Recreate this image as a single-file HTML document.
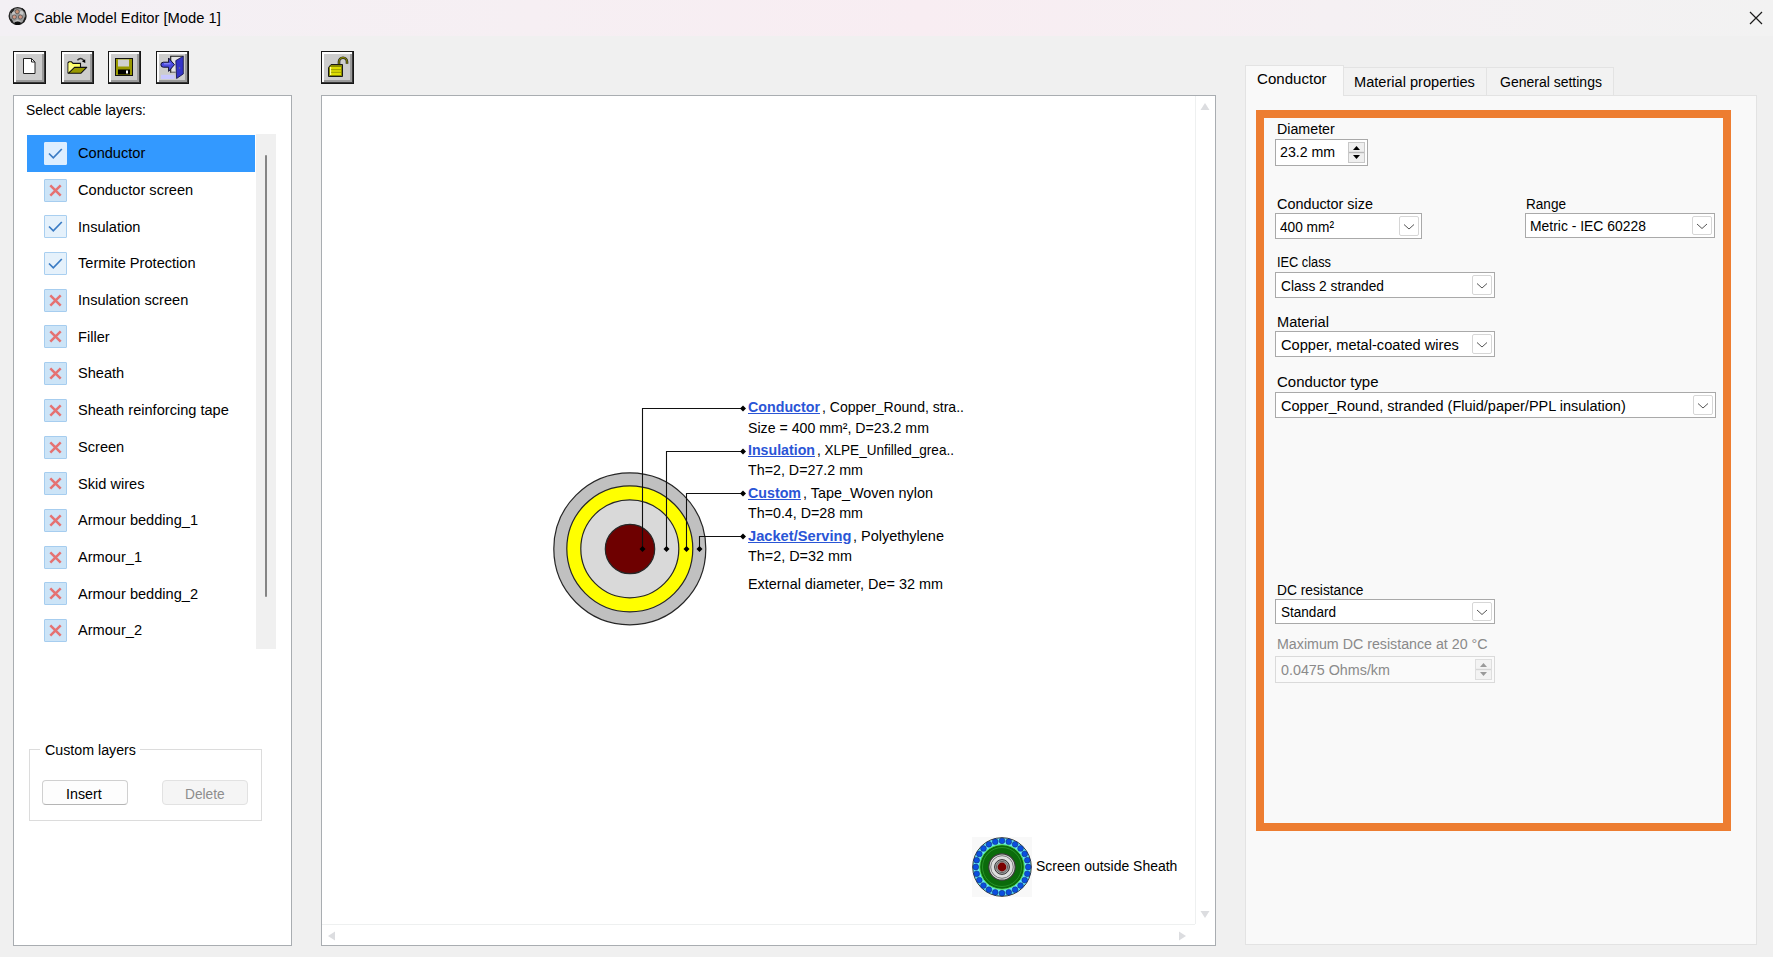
<!DOCTYPE html>
<html><head><meta charset="utf-8">
<style>
*{box-sizing:border-box;margin:0;padding:0}
html,body{width:1773px;height:957px;overflow:hidden;background:#f0f0f0;font-family:"Liberation Sans",sans-serif;color:#000}
body{position:relative}
.a{position:absolute}
.t{position:absolute;white-space:nowrap;line-height:1}
.tb{position:absolute;top:51px;width:33px;height:33px;border:1px solid #161616;background:#cdcdcd;box-shadow:inset -1px -1px 0 #383838,inset 2px 2px 0 #fdfdfd,inset -3px -3px 0 #9a9a9a}
</style></head><body>
<div class="a" style="left:0;top:0;width:1773px;height:36px;background:linear-gradient(90deg,#f3f0f4 0%,#f6eff3 30%,#f8edf2 52%,#f5f0f3 75%,#f2f2f2 100%)"></div>
<svg class="a" style="left:6px;top:4px" width="24" height="24" viewBox="0 0 24 24">
<circle cx="11.6" cy="12" r="8.4" fill="#9a9a9a" stroke="#262626" stroke-width="1.4"/>
<path d="M5 9l3-4M16 4.5l3 3M19.5 13l-2 5M4.5 15l2 3" stroke="#1c1c1c" stroke-width="1.4"/>
<circle cx="8" cy="9.5" r="2" fill="#c4c4c4"/><circle cx="15.5" cy="9" r="2" fill="#c8c8c8"/>
<circle cx="11.2" cy="7.7" r="2.1" fill="#c48f74" stroke="#555" stroke-width="0.8"/>
<circle cx="8.3" cy="13" r="2.1" fill="#d09480" stroke="#555" stroke-width="0.8"/>
<circle cx="14.4" cy="13" r="2.1" fill="#d09480" stroke="#555" stroke-width="0.8"/>
<path d="M8 17.5l3.6-2 3.6 2z" fill="#c6c6c6"/>
<ellipse cx="11.6" cy="19.3" rx="3.2" ry="1.8" fill="#0c0c0c"/>
</svg>
<div class="t" style="left:33.50px;top:9.83px;font-size:15.20px;color:#000;transform:scaleX(0.9708);transform-origin:0 0;">Cable Model Editor [Mode 1]</div>
<svg class="a" style="left:1749px;top:11px" width="14" height="14" viewBox="0 0 14 14"><path d="M1 1L13 13M13 1L1 13" stroke="#1a1a1a" stroke-width="1.2"/></svg>
<div class="tb" style="left:13px"></div>
<svg class="a" style="left:13px;top:51px" width="33" height="33" viewBox="0 0 33 33"><path d="M10.5 7.5h8l3.5 3.5v11.5h-11.5z" fill="#fff" stroke="#222" stroke-width="1"/><path d="M18.5 7.5v3.5h3.5" fill="none" stroke="#222" stroke-width="1"/></svg>
<div class="tb" style="left:61px"></div>
<svg class="a" style="left:61px;top:51px" width="33" height="33" viewBox="0 0 33 33"><path d="M7 22.3V11.8l1-1h2.5l1.6 1.6h7.4v3.6" fill="#ffff66" stroke="#111" stroke-width="1.1"/><path d="M7.6 12l0 9.5 5.5-5.2z" fill="#ffff90"/><path d="M7.3 22.3l6.2-5.9h12.2l-5.9 5.9z" fill="#999900" stroke="#111" stroke-width="1.1" stroke-linejoin="round"/><path d="M16.4 9.2q3.4-3.8 6.6 0.6" fill="none" stroke="#333" stroke-width="1.5"/><path d="M21 10.6l3.2-2.4 0.1 3.8z" fill="#000"/></svg>
<div class="tb" style="left:108px"></div>
<svg class="a" style="left:108px;top:51px" width="33" height="33" viewBox="0 0 33 33"><rect x="7.5" y="7.5" width="17" height="17" fill="#999900" stroke="#111" stroke-width="1"/><rect x="10" y="8.5" width="11" height="7" fill="#d0d0d0"/><rect x="10" y="18.5" width="12" height="5" fill="#000"/><rect x="18" y="19.5" width="2" height="3" fill="#fff"/></svg>
<div class="tb" style="left:156px"></div>
<svg class="a" style="left:156px;top:51px" width="33" height="33" viewBox="0 0 33 33"><rect x="5" y="23.8" width="13.5" height="4.2" fill="#c8c8ff"/><path d="M14.7 5.2h12.6v16.5h-12.6z" fill="#e4e4e4"/><path d="M14.7 21.7V5.2h12.6" fill="none" stroke="#1a1a1a" stroke-width="1.1"/><path d="M14.7 21.2h5" stroke="#555" stroke-width="1"/><path d="M19.8 9.6l7.5-4.4v17.7l-6.7 4.6z" fill="#3434c8" stroke="#101040" stroke-width="0.8"/><circle cx="23.5" cy="17" r="0.8" fill="#777"/><path d="M7.4 11.2h5.2V7l5.9 6.7-5.9 6.7v-4.2H7.4a2.5 2.5 0 0 1 0-5z" fill="#4a4ae0" stroke="#101030" stroke-width="1"/><path d="M8 12.8h6.5" stroke="#9a9aff" stroke-width="1"/></svg>
<div class="tb" style="left:321px"></div>
<svg class="a" style="left:321px;top:51px" width="33" height="33" viewBox="0 0 33 33"><path d="M18 13.5v-2.8a4 4 0 0 1 8 0v2" fill="none" stroke="#222" stroke-width="2.6"/><path d="M18 13.5v-2.8a4 4 0 0 1 8 0v2" fill="none" stroke="#8a8a00" stroke-width="1.2"/><path d="M7.5 16.5l2.5-3h11.5v12h-14z" fill="#8a8a00" stroke="#1a1a1a" stroke-width="1"/><rect x="9" y="16" width="11" height="8" fill="#dede00"/><rect x="9" y="16" width="1.2" height="8" fill="#ffff99"/><path d="M10 18.7h10M10 21.3h10" stroke="#9a9a00" stroke-width="1"/></svg>
<div class="a" style="left:13px;top:95px;width:279px;height:851px;background:#fff;border:1px solid #a9adb1"></div>
<div class="t" style="left:26.30px;top:101.63px;font-size:15.20px;color:#000;transform:scaleX(0.9105);transform-origin:0 0;">Select cable layers:</div>
<div class="a" style="left:256px;top:134px;width:20px;height:515px;background:#f0f0f0"></div>
<div class="a" style="left:265px;top:155px;width:2px;height:442px;background:#858585;border-radius:1px"></div>
<div class="a" style="left:27px;top:135.00px;width:228px;height:37px;background:#3399ff"></div>
<div class="a" style="left:44px;top:142.00px;width:23px;height:23px;background:#ddeeff;border:1px solid #ddeeff;border-radius:1px"></div>
<div class="a" style="left:44px;top:142.00px;width:23px;height:23px"><svg class="a" style="left:0;top:0" width="23" height="23" viewBox="0 0 23 23"><path d="M5 11.5l4.3 4.3 8.5-8.8" fill="none" stroke="#3a7bc4" stroke-width="1.7"/></svg></div>
<div class="t" style="left:78.00px;top:145.33px;font-size:15.20px;color:#000;transform:scaleX(0.9605);transform-origin:0 0;">Conductor</div>
<div class="a" style="left:44px;top:178.69px;width:23px;height:23px;background:#cce4f7;border:1px solid #a6cdef;border-radius:1px"></div>
<div class="a" style="left:44px;top:178.69px;width:23px;height:23px"><svg class="a" style="left:0;top:0" width="23" height="23" viewBox="0 0 23 23"><path d="M6.3 6.3l10.4 10.4M16.7 6.3l-10.4 10.4" fill="none" stroke="#e57272" stroke-width="2.5"/></svg></div>
<div class="t" style="left:78.00px;top:182.02px;font-size:15.20px;color:#000;transform:scaleX(0.9605);transform-origin:0 0;">Conductor screen</div>
<div class="a" style="left:44px;top:215.38px;width:23px;height:23px;background:#e5f1fb;border:1px solid #a9cff0;border-radius:1px"></div>
<div class="a" style="left:44px;top:215.38px;width:23px;height:23px"><svg class="a" style="left:0;top:0" width="23" height="23" viewBox="0 0 23 23"><path d="M5 11.5l4.3 4.3 8.5-8.8" fill="none" stroke="#3a7bc4" stroke-width="1.7"/></svg></div>
<div class="t" style="left:78.00px;top:218.71px;font-size:15.20px;color:#000;transform:scaleX(0.9605);transform-origin:0 0;">Insulation</div>
<div class="a" style="left:44px;top:252.07px;width:23px;height:23px;background:#e5f1fb;border:1px solid #a9cff0;border-radius:1px"></div>
<div class="a" style="left:44px;top:252.07px;width:23px;height:23px"><svg class="a" style="left:0;top:0" width="23" height="23" viewBox="0 0 23 23"><path d="M5 11.5l4.3 4.3 8.5-8.8" fill="none" stroke="#3a7bc4" stroke-width="1.7"/></svg></div>
<div class="t" style="left:78.00px;top:255.40px;font-size:15.20px;color:#000;transform:scaleX(0.9605);transform-origin:0 0;">Termite Protection</div>
<div class="a" style="left:44px;top:288.76px;width:23px;height:23px;background:#cce4f7;border:1px solid #a6cdef;border-radius:1px"></div>
<div class="a" style="left:44px;top:288.76px;width:23px;height:23px"><svg class="a" style="left:0;top:0" width="23" height="23" viewBox="0 0 23 23"><path d="M6.3 6.3l10.4 10.4M16.7 6.3l-10.4 10.4" fill="none" stroke="#e57272" stroke-width="2.5"/></svg></div>
<div class="t" style="left:78.00px;top:292.09px;font-size:15.20px;color:#000;transform:scaleX(0.9605);transform-origin:0 0;">Insulation screen</div>
<div class="a" style="left:44px;top:325.45px;width:23px;height:23px;background:#cce4f7;border:1px solid #a6cdef;border-radius:1px"></div>
<div class="a" style="left:44px;top:325.45px;width:23px;height:23px"><svg class="a" style="left:0;top:0" width="23" height="23" viewBox="0 0 23 23"><path d="M6.3 6.3l10.4 10.4M16.7 6.3l-10.4 10.4" fill="none" stroke="#e57272" stroke-width="2.5"/></svg></div>
<div class="t" style="left:78.00px;top:328.78px;font-size:15.20px;color:#000;transform:scaleX(0.9605);transform-origin:0 0;">Filler</div>
<div class="a" style="left:44px;top:362.14px;width:23px;height:23px;background:#cce4f7;border:1px solid #a6cdef;border-radius:1px"></div>
<div class="a" style="left:44px;top:362.14px;width:23px;height:23px"><svg class="a" style="left:0;top:0" width="23" height="23" viewBox="0 0 23 23"><path d="M6.3 6.3l10.4 10.4M16.7 6.3l-10.4 10.4" fill="none" stroke="#e57272" stroke-width="2.5"/></svg></div>
<div class="t" style="left:78.00px;top:365.47px;font-size:15.20px;color:#000;transform:scaleX(0.9605);transform-origin:0 0;">Sheath</div>
<div class="a" style="left:44px;top:398.83px;width:23px;height:23px;background:#cce4f7;border:1px solid #a6cdef;border-radius:1px"></div>
<div class="a" style="left:44px;top:398.83px;width:23px;height:23px"><svg class="a" style="left:0;top:0" width="23" height="23" viewBox="0 0 23 23"><path d="M6.3 6.3l10.4 10.4M16.7 6.3l-10.4 10.4" fill="none" stroke="#e57272" stroke-width="2.5"/></svg></div>
<div class="t" style="left:78.00px;top:402.16px;font-size:15.20px;color:#000;transform:scaleX(0.9605);transform-origin:0 0;">Sheath reinforcing tape</div>
<div class="a" style="left:44px;top:435.52px;width:23px;height:23px;background:#cce4f7;border:1px solid #a6cdef;border-radius:1px"></div>
<div class="a" style="left:44px;top:435.52px;width:23px;height:23px"><svg class="a" style="left:0;top:0" width="23" height="23" viewBox="0 0 23 23"><path d="M6.3 6.3l10.4 10.4M16.7 6.3l-10.4 10.4" fill="none" stroke="#e57272" stroke-width="2.5"/></svg></div>
<div class="t" style="left:78.00px;top:438.85px;font-size:15.20px;color:#000;transform:scaleX(0.9605);transform-origin:0 0;">Screen</div>
<div class="a" style="left:44px;top:472.21px;width:23px;height:23px;background:#cce4f7;border:1px solid #a6cdef;border-radius:1px"></div>
<div class="a" style="left:44px;top:472.21px;width:23px;height:23px"><svg class="a" style="left:0;top:0" width="23" height="23" viewBox="0 0 23 23"><path d="M6.3 6.3l10.4 10.4M16.7 6.3l-10.4 10.4" fill="none" stroke="#e57272" stroke-width="2.5"/></svg></div>
<div class="t" style="left:78.00px;top:475.54px;font-size:15.20px;color:#000;transform:scaleX(0.9605);transform-origin:0 0;">Skid wires</div>
<div class="a" style="left:44px;top:508.90px;width:23px;height:23px;background:#cce4f7;border:1px solid #a6cdef;border-radius:1px"></div>
<div class="a" style="left:44px;top:508.90px;width:23px;height:23px"><svg class="a" style="left:0;top:0" width="23" height="23" viewBox="0 0 23 23"><path d="M6.3 6.3l10.4 10.4M16.7 6.3l-10.4 10.4" fill="none" stroke="#e57272" stroke-width="2.5"/></svg></div>
<div class="t" style="left:78.00px;top:512.23px;font-size:15.20px;color:#000;transform:scaleX(0.9605);transform-origin:0 0;">Armour bedding_1</div>
<div class="a" style="left:44px;top:545.59px;width:23px;height:23px;background:#cce4f7;border:1px solid #a6cdef;border-radius:1px"></div>
<div class="a" style="left:44px;top:545.59px;width:23px;height:23px"><svg class="a" style="left:0;top:0" width="23" height="23" viewBox="0 0 23 23"><path d="M6.3 6.3l10.4 10.4M16.7 6.3l-10.4 10.4" fill="none" stroke="#e57272" stroke-width="2.5"/></svg></div>
<div class="t" style="left:78.00px;top:548.92px;font-size:15.20px;color:#000;transform:scaleX(0.9605);transform-origin:0 0;">Armour_1</div>
<div class="a" style="left:44px;top:582.28px;width:23px;height:23px;background:#cce4f7;border:1px solid #a6cdef;border-radius:1px"></div>
<div class="a" style="left:44px;top:582.28px;width:23px;height:23px"><svg class="a" style="left:0;top:0" width="23" height="23" viewBox="0 0 23 23"><path d="M6.3 6.3l10.4 10.4M16.7 6.3l-10.4 10.4" fill="none" stroke="#e57272" stroke-width="2.5"/></svg></div>
<div class="t" style="left:78.00px;top:585.61px;font-size:15.20px;color:#000;transform:scaleX(0.9605);transform-origin:0 0;">Armour bedding_2</div>
<div class="a" style="left:44px;top:618.97px;width:23px;height:23px;background:#cce4f7;border:1px solid #a6cdef;border-radius:1px"></div>
<div class="a" style="left:44px;top:618.97px;width:23px;height:23px"><svg class="a" style="left:0;top:0" width="23" height="23" viewBox="0 0 23 23"><path d="M6.3 6.3l10.4 10.4M16.7 6.3l-10.4 10.4" fill="none" stroke="#e57272" stroke-width="2.5"/></svg></div>
<div class="t" style="left:78.00px;top:622.30px;font-size:15.20px;color:#000;transform:scaleX(0.9605);transform-origin:0 0;">Armour_2</div>
<div class="a" style="left:29px;top:749px;width:233px;height:72px;border:1px solid #dcdcdc"></div>
<div class="a" style="left:40px;top:742px;width:100px;height:16px;background:#fff"></div>
<div class="t" style="left:45.00px;top:742.13px;font-size:15.20px;color:#000;transform:scaleX(0.9369);transform-origin:0 0;">Custom layers</div>
<div class="a" style="left:42px;top:780px;width:86px;height:25px;background:#fdfdfd;border:1px solid #d0d0d0;border-bottom-color:#b5b5b5;border-radius:4px"></div>
<div class="t" style="left:66.30px;top:785.93px;font-size:15.20px;color:#000;transform:scaleX(0.9392);transform-origin:0 0;">Insert</div>
<div class="a" style="left:162px;top:780px;width:86px;height:25px;background:#f5f5f5;border:1px solid #e2e2e2;border-radius:4px"></div>
<div class="t" style="left:184.50px;top:785.93px;font-size:15.20px;color:#8d8d8d;transform:scaleX(0.9036);transform-origin:0 0;">Delete</div>
<div class="a" style="left:321px;top:95px;width:895px;height:851px;background:#fff;border:1px solid #a9adb1"></div>
<div class="a" style="left:1195px;top:96px;width:1px;height:828px;background:#eef0f0"></div>
<div class="a" style="left:322px;top:924px;width:873px;height:1px;background:#eef0f0"></div>
<svg class="a" style="left:540px;top:395px" width="240" height="245" viewBox="540 395 240 245">
<g stroke="#262626" stroke-width="1.2">
<circle cx="629.8" cy="548.8" r="76" fill="#c0c0c0"/>
<circle cx="629.8" cy="548.8" r="63" fill="#ffff00"/>
<circle cx="629.8" cy="548.8" r="49" fill="#d9d9d9"/>
<circle cx="630" cy="549" r="24.7" fill="#6e0000"/>
</g>
<g stroke="#111" stroke-width="1.1" fill="none">
<path d="M642.5 549V408.5H742"/>
<path d="M666.5 549V451.5H742"/>
<path d="M686.5 549V493.5H742"/>
<path d="M699.5 549V536.5H742"/>
</g>
<g fill="#000">
<path d="M642.5 546l3 3-3 3-3-3z"/><path d="M666.5 546l3 3-3 3-3-3z"/><path d="M686.5 546l3 3-3 3-3-3z"/><path d="M699.5 546l3 3-3 3-3-3z"/>
<path d="M743 405.5l3 3-3 3-3-3z"/><path d="M743 448.5l3 3-3 3-3-3z"/><path d="M743 490.5l3 3-3 3-3-3z"/><path d="M743 533.5l3 3-3 3-3-3z"/>
</g>
</svg>
<div class="t" style="left:748.20px;top:400.24px;font-size:14.60px;color:#2a55d6;font-weight:bold;transform:scaleX(0.9757);transform-origin:0 0;text-decoration:underline;">Conductor</div>
<div class="t" style="left:821.50px;top:400.24px;font-size:14.60px;color:#000;transform:scaleX(0.9615);transform-origin:0 0;">, Copper_Round, stra..</div>
<div class="t" style="left:748.20px;top:421.04px;font-size:14.60px;color:#000;transform:scaleX(0.9699);transform-origin:0 0;">Size = 400 mm&sup2;, D=23.2 mm</div>
<div class="t" style="left:748.20px;top:442.94px;font-size:14.60px;color:#2a55d6;font-weight:bold;transform:scaleX(0.9719);transform-origin:0 0;text-decoration:underline;">Insulation</div>
<div class="t" style="left:816.50px;top:442.94px;font-size:14.60px;color:#000;transform:scaleX(0.9275);transform-origin:0 0;">, XLPE_Unfilled_grea..</div>
<div class="t" style="left:748.20px;top:463.44px;font-size:14.60px;color:#000;transform:scaleX(0.9774);transform-origin:0 0;">Th=2, D=27.2 mm</div>
<div class="t" style="left:748.20px;top:485.84px;font-size:14.60px;color:#2a55d6;font-weight:bold;transform:scaleX(0.9753);transform-origin:0 0;text-decoration:underline;">Custom</div>
<div class="t" style="left:802.80px;top:485.84px;font-size:14.60px;color:#000;transform:scaleX(0.9867);transform-origin:0 0;">, Tape_Woven nylon</div>
<div class="t" style="left:748.20px;top:506.44px;font-size:14.60px;color:#000;transform:scaleX(0.9774);transform-origin:0 0;">Th=0.4, D=28 mm</div>
<div class="t" style="left:748.20px;top:528.84px;font-size:14.60px;color:#2a55d6;font-weight:bold;transform:scaleX(1.0042);transform-origin:0 0;text-decoration:underline;">Jacket/Serving</div>
<div class="t" style="left:853.00px;top:528.84px;font-size:14.60px;color:#000;transform:scaleX(0.9923);transform-origin:0 0;">, Polyethylene</div>
<div class="t" style="left:748.20px;top:549.44px;font-size:14.60px;color:#000;transform:scaleX(0.9859);transform-origin:0 0;">Th=2, D=32 mm</div>
<div class="t" style="left:748.20px;top:577.44px;font-size:14.60px;color:#000;transform:scaleX(0.9869);transform-origin:0 0;">External diameter, De= 32 mm</div>
<svg class="a" style="left:972px;top:837px" width="60" height="60" viewBox="0 0 60 60">
<rect width="60" height="60" fill="#f8f8f8"/>
<circle cx="30" cy="30" r="29.3" fill="#5ee6ff" stroke="#3a3a3a" stroke-width="1"/>
<circle cx="56.20" cy="30.00" r="2.9" fill="#0a4fe0" stroke="#1a2a60" stroke-width="0.5"/><circle cx="55.31" cy="36.78" r="2.9" fill="#0a4fe0" stroke="#1a2a60" stroke-width="0.5"/><circle cx="52.69" cy="43.10" r="2.9" fill="#0a4fe0" stroke="#1a2a60" stroke-width="0.5"/><circle cx="48.53" cy="48.53" r="2.9" fill="#0a4fe0" stroke="#1a2a60" stroke-width="0.5"/><circle cx="43.10" cy="52.69" r="2.9" fill="#0a4fe0" stroke="#1a2a60" stroke-width="0.5"/><circle cx="36.78" cy="55.31" r="2.9" fill="#0a4fe0" stroke="#1a2a60" stroke-width="0.5"/><circle cx="30.00" cy="56.20" r="2.9" fill="#0a4fe0" stroke="#1a2a60" stroke-width="0.5"/><circle cx="23.22" cy="55.31" r="2.9" fill="#0a4fe0" stroke="#1a2a60" stroke-width="0.5"/><circle cx="16.90" cy="52.69" r="2.9" fill="#0a4fe0" stroke="#1a2a60" stroke-width="0.5"/><circle cx="11.47" cy="48.53" r="2.9" fill="#0a4fe0" stroke="#1a2a60" stroke-width="0.5"/><circle cx="7.31" cy="43.10" r="2.9" fill="#0a4fe0" stroke="#1a2a60" stroke-width="0.5"/><circle cx="4.69" cy="36.78" r="2.9" fill="#0a4fe0" stroke="#1a2a60" stroke-width="0.5"/><circle cx="3.80" cy="30.00" r="2.9" fill="#0a4fe0" stroke="#1a2a60" stroke-width="0.5"/><circle cx="4.69" cy="23.22" r="2.9" fill="#0a4fe0" stroke="#1a2a60" stroke-width="0.5"/><circle cx="7.31" cy="16.90" r="2.9" fill="#0a4fe0" stroke="#1a2a60" stroke-width="0.5"/><circle cx="11.47" cy="11.47" r="2.9" fill="#0a4fe0" stroke="#1a2a60" stroke-width="0.5"/><circle cx="16.90" cy="7.31" r="2.9" fill="#0a4fe0" stroke="#1a2a60" stroke-width="0.5"/><circle cx="23.22" cy="4.69" r="2.9" fill="#0a4fe0" stroke="#1a2a60" stroke-width="0.5"/><circle cx="30.00" cy="3.80" r="2.9" fill="#0a4fe0" stroke="#1a2a60" stroke-width="0.5"/><circle cx="36.78" cy="4.69" r="2.9" fill="#0a4fe0" stroke="#1a2a60" stroke-width="0.5"/><circle cx="43.10" cy="7.31" r="2.9" fill="#0a4fe0" stroke="#1a2a60" stroke-width="0.5"/><circle cx="48.53" cy="11.47" r="2.9" fill="#0a4fe0" stroke="#1a2a60" stroke-width="0.5"/><circle cx="52.69" cy="16.90" r="2.9" fill="#0a4fe0" stroke="#1a2a60" stroke-width="0.5"/><circle cx="55.31" cy="23.22" r="2.9" fill="#0a4fe0" stroke="#1a2a60" stroke-width="0.5"/>
<circle cx="30" cy="30" r="22.3" fill="#0b6b0b" stroke="#5ee05e" stroke-width="1"/>
<circle cx="30" cy="30" r="19.5" fill="none" stroke="#2f9a2f" stroke-width="0.8"/>
<circle cx="30" cy="30" r="13.2" fill="#dedede" stroke="#3a3a3a" stroke-width="1.2"/>
<circle cx="30" cy="30" r="11.3" fill="none" stroke="#777" stroke-width="1"/>
<circle cx="30" cy="30" r="7.4" fill="#a8a8a8" stroke="#333" stroke-width="1"/>
<circle cx="30" cy="30" r="5.6" fill="none" stroke="#555" stroke-width="0.8"/>
<circle cx="30" cy="30" r="4.4" fill="#7a0000"/>
</svg>
<div class="t" style="left:1035.60px;top:858.43px;font-size:15.20px;color:#000;transform:scaleX(0.9201);transform-origin:0 0;">Screen outside Sheath</div>
<svg class="a" style="left:1198px;top:100px" width="14" height="12"><path d="M2.5 10h9l-4.5-7z" fill="#dcdde0"/></svg>
<svg class="a" style="left:1198px;top:909px" width="14" height="12"><path d="M2.5 2h9l-4.5 7z" fill="#dcdde0"/></svg>
<svg class="a" style="left:325px;top:929px" width="12" height="14"><path d="M10 2.5v9l-7-4.5z" fill="#dcdde0"/></svg>
<svg class="a" style="left:1177px;top:929px" width="12" height="14"><path d="M2 2.5v9l7-4.5z" fill="#dcdde0"/></svg>
<div class="a" style="left:1245px;top:95px;width:512px;height:850px;background:#f9f9f9;border:1px solid #e3e3e3"></div>
<div class="a" style="left:1343px;top:67px;width:144px;height:29px;background:#f2f2f2;border:1px solid #e3e3e3"></div>
<div class="a" style="left:1486px;top:67px;width:128px;height:29px;background:#f2f2f2;border:1px solid #e3e3e3"></div>
<div class="a" style="left:1245px;top:65px;width:99px;height:31px;background:#f9f9f9;border:1px solid #e3e3e3;border-bottom:none"></div>
<div class="t" style="left:1257.00px;top:71.23px;font-size:15.20px;color:#000;transform:scaleX(0.9925);transform-origin:0 0;">Conductor</div>
<div class="t" style="left:1353.70px;top:73.53px;font-size:15.20px;color:#000;transform:scaleX(0.9613);transform-origin:0 0;">Material properties</div>
<div class="t" style="left:1499.70px;top:73.53px;font-size:15.20px;color:#000;transform:scaleX(0.9216);transform-origin:0 0;">General settings</div>
<div class="a" style="left:1256px;top:110px;width:475px;height:721px;border:8px solid #ed7d31"></div>
<div class="t" style="left:1277.00px;top:120.93px;font-size:15.20px;color:#000;transform:scaleX(0.9374);transform-origin:0 0;">Diameter</div>
<div class="a" style="left:1275px;top:139px;width:93px;height:27px;background:#fff;border:1px solid #a9a9a9"></div>
<svg class="a" style="left:1348px;top:142px" width="17" height="21" viewBox="0 0 17 21"><rect x="0.5" y="0.5" width="16" height="20" fill="#efefef" stroke="#c8c8c8"/><line x1="1" y1="10.5" x2="16" y2="10.5" stroke="#b8b8b8" stroke-width="1.4"/><path d="M5 8.0h7l-3.5-4z" fill="#000"/><path d="M5 13.0h7l-3.5 4z" fill="#000"/></svg>
<div class="t" style="left:1280.20px;top:144.23px;font-size:15.20px;color:#000;transform:scaleX(0.9336);transform-origin:0 0;">23.2 mm</div>
<div class="t" style="left:1277.00px;top:195.53px;font-size:15.20px;color:#000;transform:scaleX(0.9470);transform-origin:0 0;">Conductor size</div>
<div class="a" style="left:1275px;top:213px;width:147px;height:26px;background:#fff;border:1px solid #a9a9a9"></div>
<svg class="a" style="left:1399px;top:216px" width="20" height="20" viewBox="0 0 20 20"><rect x="0.5" y="0.5" width="19" height="19" rx="1.5" fill="#fff" stroke="#d6d6d6"/><path d="M5 8.5l5 4.5 5-4.5" fill="none" stroke="#555" stroke-width="1"/></svg>
<div class="t" style="left:1280.20px;top:218.53px;font-size:15.20px;color:#000;transform:scaleX(0.9005);transform-origin:0 0;">400 mm&sup2;</div>
<div class="t" style="left:1526.00px;top:195.53px;font-size:15.20px;color:#000;transform:scaleX(0.8931);transform-origin:0 0;">Range</div>
<div class="a" style="left:1525px;top:213px;width:190px;height:25px;background:#fff;border:1px solid #a9a9a9"></div>
<svg class="a" style="left:1692px;top:216px" width="20" height="19" viewBox="0 0 20 19"><rect x="0.5" y="0.5" width="19" height="18" rx="1.5" fill="#fff" stroke="#d6d6d6"/><path d="M5 8.0l5 4.5 5-4.5" fill="none" stroke="#555" stroke-width="1"/></svg>
<div class="t" style="left:1529.50px;top:217.73px;font-size:15.20px;color:#000;transform:scaleX(0.9155);transform-origin:0 0;">Metric - IEC 60228</div>
<div class="t" style="left:1277.00px;top:254.13px;font-size:15.20px;color:#000;transform:scaleX(0.8412);transform-origin:0 0;">IEC class</div>
<div class="a" style="left:1275px;top:272px;width:220px;height:26px;background:#fff;border:1px solid #a9a9a9"></div>
<svg class="a" style="left:1472px;top:275px" width="20" height="20" viewBox="0 0 20 20"><rect x="0.5" y="0.5" width="19" height="19" rx="1.5" fill="#fff" stroke="#d6d6d6"/><path d="M5 8.5l5 4.5 5-4.5" fill="none" stroke="#555" stroke-width="1"/></svg>
<div class="t" style="left:1280.50px;top:277.73px;font-size:15.20px;color:#000;transform:scaleX(0.9031);transform-origin:0 0;">Class 2 stranded</div>
<div class="t" style="left:1277.00px;top:314.13px;font-size:15.20px;color:#000;transform:scaleX(0.9619);transform-origin:0 0;">Material</div>
<div class="a" style="left:1275px;top:331px;width:220px;height:26px;background:#fff;border:1px solid #a9a9a9"></div>
<svg class="a" style="left:1472px;top:334px" width="20" height="20" viewBox="0 0 20 20"><rect x="0.5" y="0.5" width="19" height="19" rx="1.5" fill="#fff" stroke="#d6d6d6"/><path d="M5 8.5l5 4.5 5-4.5" fill="none" stroke="#555" stroke-width="1"/></svg>
<div class="t" style="left:1280.60px;top:336.73px;font-size:15.20px;color:#000;transform:scaleX(0.9621);transform-origin:0 0;">Copper, metal-coated wires</div>
<div class="t" style="left:1277.00px;top:374.33px;font-size:15.20px;color:#000;transform:scaleX(0.9857);transform-origin:0 0;">Conductor type</div>
<div class="a" style="left:1275px;top:392px;width:441px;height:26px;background:#fff;border:1px solid #a9a9a9"></div>
<svg class="a" style="left:1693px;top:395px" width="20" height="20" viewBox="0 0 20 20"><rect x="0.5" y="0.5" width="19" height="19" rx="1.5" fill="#fff" stroke="#d6d6d6"/><path d="M5 8.5l5 4.5 5-4.5" fill="none" stroke="#555" stroke-width="1"/></svg>
<div class="t" style="left:1280.60px;top:398.33px;font-size:15.20px;color:#000;transform:scaleX(0.9533);transform-origin:0 0;">Copper_Round, stranded (Fluid/paper/PPL insulation)</div>
<div class="t" style="left:1277.00px;top:582.13px;font-size:15.20px;color:#000;transform:scaleX(0.9062);transform-origin:0 0;">DC resistance</div>
<div class="a" style="left:1275px;top:599px;width:220px;height:25px;background:#fff;border:1px solid #a9a9a9"></div>
<svg class="a" style="left:1472px;top:602px" width="20" height="19" viewBox="0 0 20 19"><rect x="0.5" y="0.5" width="19" height="18" rx="1.5" fill="#fff" stroke="#d6d6d6"/><path d="M5 8.0l5 4.5 5-4.5" fill="none" stroke="#555" stroke-width="1"/></svg>
<div class="t" style="left:1280.60px;top:604.13px;font-size:15.20px;color:#000;transform:scaleX(0.8916);transform-origin:0 0;">Standard</div>
<div class="t" style="left:1277.00px;top:635.93px;font-size:15.20px;color:#8a8a8a;transform:scaleX(0.9371);transform-origin:0 0;">Maximum DC resistance at 20 &deg;C</div>
<div class="a" style="left:1275px;top:656px;width:220px;height:27px;background:#fafafa;border:1px solid #dadada"></div>
<svg class="a" style="left:1475px;top:659px" width="17" height="21" viewBox="0 0 17 21"><rect x="0.5" y="0.5" width="16" height="20" fill="#f3f3f3" stroke="#dedede"/><line x1="1" y1="10.5" x2="16" y2="10.5" stroke="#d6d6d6" stroke-width="1.4"/><path d="M5 8.0h7l-3.5-4z" fill="#9a9a9a"/><path d="M5 13.0h7l-3.5 4z" fill="#9a9a9a"/></svg>
<div class="t" style="left:1280.60px;top:661.63px;font-size:15.20px;color:#8a8a8a;transform:scaleX(0.9419);transform-origin:0 0;">0.0475 Ohms/km</div>
</body></html>
